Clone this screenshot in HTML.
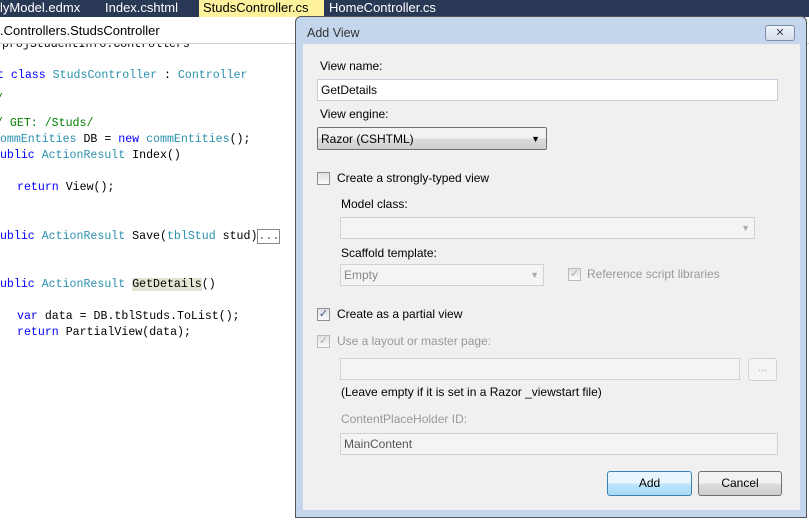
<!DOCTYPE html>
<html><head><meta charset="utf-8"><style>
*{margin:0;padding:0;box-sizing:border-box}
body{width:809px;height:527px;overflow:hidden;position:relative;background:#fff;font-family:"Liberation Sans",sans-serif}
.tabs{position:absolute;left:0;top:0;width:809px;height:17px;background:#293955}
.tab{position:absolute;top:0;height:17px;font-size:13px;line-height:16px;color:#fff}
.crumb{position:absolute;left:0;top:17px;width:809px;height:27px;background:#fff;border-bottom:1px solid #ccd;font-size:13px;line-height:28px;color:#000}
.code{position:absolute;font-family:"Liberation Mono",monospace;font-size:11.6px;line-height:16px;white-space:pre;color:#000}
.k{color:#00f}.t{color:#2b91af}.c{color:#008000}
.dlg{position:absolute;left:295px;top:16px;width:512px;height:502px;background:#c4d6ec;border:1px solid #555;border-radius:6px 6px 0 0}
.l{position:absolute;font-size:12px;color:#000;white-space:nowrap}
.g{color:#999}
.in{position:absolute;background:#fff;border:1px solid #c5cdd8;font-size:12px;padding-left:3px;line-height:20px}
.dis{background:#f4f4f4;border-color:#cfd3d8}
.cb{position:absolute;width:13px;height:13px;border:1px solid #8e8f8f;background:linear-gradient(#e0e0e0,#fafafa);font-size:11px;line-height:11px;text-align:center;color:#3a4d8f}
.btn{position:absolute;border:1px solid #707070;border-radius:3px;background:linear-gradient(#f2f2f2 50%,#dcdcdc 50%,#cfcfcf);font-size:12px;text-align:center;line-height:22px}
</style></head><body>
<div class="tabs">
<div class="tab" style="left:0">lyModel.edmx</div>
<div class="tab" style="left:105px">Index.cshtml</div>
<div class="tab" style="left:199px;width:125px;background:#fff29d;color:#000;padding-left:4px">StudsController.cs <span style="color:#666;margin-left:4px">✕</span></div>
<div class="tab" style="left:329px">HomeController.cs</div>
</div>
<div class="crumb">.Controllers.StudsController</div>
<div class="code" style="left:2px;top:37px;clip-path:inset(7px 0 0 0)">projStudentInfo.Controllers</div>
<div class="code" style="left:-3px;top:68px"><span class="k">t class</span> <span class="t">StudsController</span> : <span class="t">Controller</span></div>
<div class="code c" style="left:-4px;top:92px">/</div>
<div class="code c" style="left:-4px;top:116px">/ GET: /Studs/</div>
<div class="code" style="left:-7px;top:132px"><span class="t">commEntities</span> DB = <span class="k">new</span> <span class="t">commEntities</span>();</div>
<div class="code" style="left:-7px;top:148px"><span class="k">public</span> <span class="t">ActionResult</span> Index()</div>
<div class="code" style="left:17px;top:180px"><span class="k">return</span> View();</div>
<div class="code" style="left:-7px;top:229px"><span class="k">public</span> <span class="t">ActionResult</span> Save(<span class="t">tblStud</span> stud)<span style="border:1px solid #888;color:#555">...</span></div>
<div class="code" style="left:-7px;top:277px"><span class="k">public</span> <span class="t">ActionResult</span> <span style="background:#e4e4d4">GetDetails</span>()</div>
<div class="code" style="left:17px;top:309px"><span class="k">var</span> data = DB.tblStuds.ToList();</div>
<div class="code" style="left:17px;top:325px"><span class="k">return</span> PartialView(data);</div>

<div class="dlg">
<div class="l" style="left:11px;top:9px;font-size:12.5px;color:#333">Add View</div>
<div style="position:absolute;left:469px;top:8px;width:30px;height:16px;border:1px solid #7d8fa8;border-radius:3px;background:linear-gradient(#eef3f9,#d5e0ee);font-size:11px;text-align:center;line-height:14px;color:#445">✕</div>
</div>
<div style="position:absolute;left:303px;top:44px;width:497px;height:466px;background:#f0f0f0"></div>

<div class="l" style="left:320px;top:59px">View name:</div>
<div class="in" style="left:317px;top:79px;width:461px;height:22px">GetDetails</div>
<div class="l" style="left:320px;top:107px">View engine:</div>
<div class="btn" style="left:317px;top:127px;width:230px;height:23px;text-align:left;padding-left:3px;border-radius:2px">Razor (CSHTML)<span style="position:absolute;right:6px;top:0;font-size:9px">▼</span></div>
<div class="cb" style="left:317px;top:172px"></div>
<div class="l" style="left:337px;top:171px">Create a strongly-typed view</div>
<div class="l" style="left:341px;top:197px">Model class:</div>
<div class="in dis" style="left:340px;top:217px;width:415px;height:22px"><span style="position:absolute;right:4px;top:0;font-size:9px;color:#aaa">▼</span></div>
<div class="l" style="left:341px;top:246px">Scaffold template:</div>
<div class="in dis" style="left:340px;top:264px;width:204px;height:22px;color:#888">Empty<span style="position:absolute;right:4px;top:0;font-size:9px;color:#aaa">▼</span></div>
<div class="cb" style="left:568px;top:268px;border-color:#bbb;color:#aaa">✓</div>
<div class="l g" style="left:587px;top:267px">Reference script libraries</div>
<div class="cb" style="left:317px;top:308px">✓</div>
<div class="l" style="left:337px;top:307px">Create as a partial view</div>
<div class="cb" style="left:317px;top:335px;border-color:#bbb;color:#aaa">✓</div>
<div class="l g" style="left:337px;top:334px">Use a layout or master page:</div>
<div class="in dis" style="left:340px;top:358px;width:400px;height:22px"></div>
<div class="in dis" style="left:748px;top:358px;width:29px;height:23px;border-radius:3px;text-align:center;padding:0;color:#aaa;font-size:10px">...</div>
<div class="l" style="left:341px;top:385px">(Leave empty if it is set in a Razor _viewstart file)</div>
<div class="l g" style="left:341px;top:412px">ContentPlaceHolder ID:</div>
<div class="in dis" style="left:340px;top:433px;width:438px;height:22px;color:#555">MainContent</div>
<div class="btn" style="left:607px;top:471px;width:85px;height:25px;border-color:#3c7fb1;background:linear-gradient(#eaf6fd 50%,#bee6fd 50%,#a7d9f5)">Add</div>
<div class="btn" style="left:698px;top:471px;width:84px;height:25px">Cancel</div>
</body></html>
